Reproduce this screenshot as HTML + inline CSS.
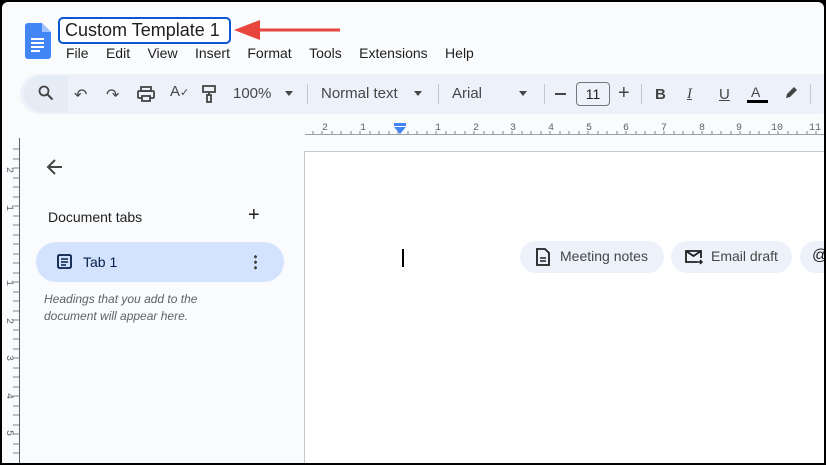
<!DOCTYPE html>
<html><head><meta charset="utf-8"><style>
*{margin:0;padding:0;box-sizing:border-box}
body{width:826px;height:465px;overflow:hidden;background:#000;font-family:"Liberation Sans",Arial,sans-serif;position:relative}
.frame{position:absolute;left:2px;top:2px;width:822px;height:461px;background:#f9fbfd;overflow:hidden;border-radius:6px 6px 0 0}
.a{position:absolute}
.menu span{margin-right:17.4px}
.tb{position:absolute;left:18px;top:72px;width:820px;height:40px;background:#edf2fa;border-radius:20px}
.t{position:absolute;font-size:14px;color:#444746}
.dd{position:absolute;top:89px;width:0;height:0;border-left:4.5px solid transparent;border-right:4.5px solid transparent;border-top:5px solid #444746}
.sep{position:absolute;top:82px;width:1px;height:20px;background:#c7c7c7}
</style></head><body>
<div class="frame">
<svg class="a" style="left:23px;top:21px" width="26" height="36" viewBox="0 0 26 36"><path d="M3 0h14l9 9v24a3 3 0 0 1-3 3H3a3 3 0 0 1-3-3V3a3 3 0 0 1 3-3z" fill="#4285f4"/><path d="M17 0v9h9z" fill="#a1c2fa"/><rect x="6" y="15" width="13" height="2" fill="#fff"/><rect x="6" y="19" width="13" height="2" fill="#fff"/><rect x="6" y="23" width="13" height="2" fill="#fff"/><rect x="6" y="27" width="9" height="2" fill="#fff"/></svg>
<div class="a" style="left:56px;top:15px;width:173px;height:27px;border:2px solid #0b57d0;border-radius:5px;background:#fff"></div>
<div class="a" style="left:63px;top:18px;font-size:18px;color:#1f1f1f">Custom Template 1</div>
<svg class="a" style="left:230px;top:16px" width="112" height="24"><path d="M8 12h100" stroke="#e8453c" stroke-width="3"/><path d="M2 12l26-10v20z" fill="#e8453c"/></svg>
<div class="a menu" style="left:64px;top:43px;font-size:14px;color:#1f1f1f;white-space:nowrap"><span>File</span><span>Edit</span><span>View</span><span>Insert</span><span>Format</span><span>Tools</span><span>Extensions</span><span>Help</span></div>
<div class="tb"></div>
<div class="a" style="left:22px;top:74px;width:44px;height:36px;background:#e6ecf6;border-radius:18px 0 0 18px"></div>
<svg class="a" style="left:36px;top:83px" width="16" height="16"><circle cx="6" cy="6" r="4.5" stroke="#444" stroke-width="1.8" fill="none"/><path d="M9.5 9.5l5 5" stroke="#444" stroke-width="2"/></svg>
<div class="t" style="left:72px;top:83px;font-size:16px">↶</div>
<div class="t" style="left:104px;top:83px;font-size:16px">↷</div>
<svg class="a" style="left:135px;top:84px" width="18" height="16"><rect x="4" y="1" width="10" height="4" fill="none" stroke="#444" stroke-width="1.8"/><rect x="1" y="5" width="16" height="7" rx="1" fill="none" stroke="#444" stroke-width="1.8"/><rect x="5" y="10" width="8" height="5" fill="#edf2fa" stroke="#444" stroke-width="1.8"/></svg>
<div class="t" style="left:168px;top:81px;font-size:15px">A<span style="font-size:11px">✓</span></div>
<svg class="a" style="left:200px;top:83px" width="14" height="18"><rect x="1" y="1" width="12" height="6" fill="none" stroke="#444" stroke-width="1.8"/><path d="M7 7v3" stroke="#444" stroke-width="1.8"/><rect x="5" y="10" width="4" height="7" fill="none" stroke="#444" stroke-width="1.8"/></svg>
<div class="t" style="left:231px;top:83px;font-size:15px">100%</div>
<div class="dd" style="left:283px"></div>
<div class="sep" style="left:305px"></div>
<div class="t" style="left:319px;top:83px;font-size:15px">Normal text</div>
<div class="dd" style="left:412px"></div>
<div class="sep" style="left:436px"></div>
<div class="t" style="left:450px;top:83px;font-size:15px">Arial</div>
<div class="dd" style="left:517px"></div>
<div class="sep" style="left:542px"></div>
<div class="a" style="left:553px;top:91px;width:11px;height:2px;background:#444"></div>
<div class="a" style="left:574px;top:80px;width:34px;height:24px;border:1px solid #747775;border-radius:4px;font-size:14px;text-align:center;line-height:22px;color:#1f1f1f">11</div>
<div class="t" style="left:616px;top:80px;font-size:20px">+</div>
<div class="sep" style="left:639px"></div>
<div class="t" style="left:653px;top:84px;font-size:15px;font-weight:bold">B</div>
<div class="t" style="left:685px;top:84px;font-size:15px;font-style:italic;font-family:'Liberation Serif',serif;text-decoration:underline">I</div>
<div class="t" style="left:717px;top:84px;font-size:15px;text-decoration:underline">U</div>
<div class="t" style="left:749px;top:82px;font-size:14px">A</div>
<div class="a" style="left:745px;top:98px;width:21px;height:3px;background:#000"></div>
<svg class="a" style="left:781px;top:83px" width="16" height="16"><path d="M3 13l1-4 7-7 3 3-7 7z" fill="#444"/></svg>
<div class="sep" style="left:808px"></div>
<div class="a" style="left:0;top:113px;width:822px;height:23px;background:#f9fbfd"></div>
<div class="a" style="left:303px;top:132px;width:520px;height:1px;background:#9aa0a6"></div>
<svg class="a" style="left:303px;top:118px" width="520" height="16" font-family="Liberation Mono,monospace" font-size="10" fill="#5f6368">
<g stroke="#80868b" stroke-width="1">
<path d="M8 11v3M17 11v3M27 11v3M36 11v3M46 11v3M55 11v3M65 11v3M74 11v3M84 11v3M93 11v3M103 11v3M112 11v3M122 11v3M131 11v3M141 11v3M150 11v3M160 11v3M169 11v3M179 11v3M188 11v3M198 11v3M207 11v3M217 11v3M226 11v3M236 11v3M245 11v3M255 11v3M264 11v3M274 11v3M283 11v3M293 11v3M302 11v3M312 11v3M321 11v3M331 11v3M340 11v3M350 11v3M359 11v3M369 11v3M378 11v3M388 11v3M397 11v3M407 11v3M416 11v3M426 11v3M435 11v3M445 11v3M454 11v3M464 11v3M473 11v3M483 11v3M492 11v3M502 11v3M511 11v3"/></g>
<text x="17" y="10">2</text><text x="55" y="10">1</text><text x="130" y="10">1</text><text x="168" y="10">2</text><text x="205" y="10">3</text><text x="243" y="10">4</text><text x="281" y="10">5</text><text x="318" y="10">6</text><text x="356" y="10">7</text><text x="394" y="10">8</text><text x="431" y="10">9</text><text x="466" y="10">10</text><text x="504" y="10">11</text>
</svg>
<svg class="a" style="left:391px;top:121px" width="14" height="12"><rect x="1" y="0" width="12" height="3" fill="#4285f4"/><path d="M1 4h12l-6 7z" fill="#4285f4"/></svg>
<div class="a" style="left:17px;top:136px;width:1px;height:330px;background:#5f6368"></div>
<svg class="a" style="left:2px;top:136px" width="16" height="330" font-family="Liberation Mono,monospace" font-size="10" fill="#5f6368">
<g stroke="#80868b"><path d="M9 11h6M9 21h6M9 30h6M9 40h6M9 49h6M9 59h6M9 68h6M9 78h6M9 87h6M9 97h6M9 106h6M9 116h6M9 125h6M9 135h6M9 144h6M9 154h6M9 163h6M9 173h6M9 182h6M9 192h6M9 201h6M9 211h6M9 220h6M9 230h6M9 239h6M9 249h6M9 258h6M9 268h6M9 277h6M9 287h6M9 296h6M9 306h6M9 315h6"/></g>
<g transform="rotate(90)"><text x="29" y="-3">2</text><text x="67" y="-3">1</text><text x="142" y="-3">1</text><text x="180" y="-3">2</text><text x="217" y="-3">3</text><text x="255" y="-3">4</text><text x="292" y="-3">5</text></g>
</svg>
<svg class="a" style="left:43px;top:155px" width="20" height="20"><path d="M17 10H4M10 3l-7 7 7 7" stroke="#444746" stroke-width="2" fill="none"/></svg>
<div class="a" style="left:46px;top:207px;font-size:14px;color:#1f1f1f">Document tabs</div>
<div class="a" style="left:246px;top:202px;font-size:20px;color:#1f1f1f">+</div>
<div class="a" style="left:34px;top:240px;width:248px;height:40px;background:#d3e3fd;border-radius:20px"></div>
<svg class="a" style="left:55px;top:252px" width="16" height="16"><rect x="1" y="1" width="13" height="13" rx="1.5" fill="none" stroke="#041e49" stroke-width="1.8"/><path d="M4 5h7M4 8h7M4 11h5" stroke="#041e49" stroke-width="1.5"/></svg>
<div class="a" style="left:81px;top:252px;font-size:14px;color:#041e49">Tab 1</div>
<div class="a" style="left:252px;top:252px;width:3px;height:16px;background:radial-gradient(circle,#444 1.5px,transparent 1.6px) 0 0/3px 5.5px"></div>
<div class="a" style="left:42px;top:289px;font-size:12px;font-style:italic;color:#5f6368;line-height:17px">Headings that you add to the<br>document will appear here.</div>
<div class="a" style="left:302px;top:149px;width:530px;height:320px;background:#fff;border:1px solid #c7c7c7"></div>
<div class="a" style="left:400px;top:247px;width:2px;height:18px;background:#000"></div>
<div class="a" style="left:518px;top:239px;width:144px;height:32px;background:#edf2fa;border-radius:16px"></div>
<svg class="a" style="left:534px;top:246px" width="14" height="18"><path d="M1 1h8l4 4v12H1z" fill="none" stroke="#1f1f1f" stroke-width="1.8"/><path d="M4 10h6M4 13h6" stroke="#1f1f1f" stroke-width="1.5"/></svg>
<div class="a" style="left:558px;top:246px;font-size:14px;color:#444746">Meeting notes</div>
<div class="a" style="left:669px;top:239px;width:121px;height:32px;background:#edf2fa;border-radius:16px"></div>
<svg class="a" style="left:683px;top:248px" width="18" height="15"><path d="M12 12H1V1h15v7" fill="none" stroke="#1f1f1f" stroke-width="1.8"/><path d="M1 1l7.5 5L16 1" fill="none" stroke="#1f1f1f" stroke-width="1.8"/><path d="M12 12h5M15 10l2 2-2 2" stroke="#1f1f1f" stroke-width="1.5" fill="none"/></svg>
<div class="a" style="left:709px;top:246px;font-size:14px;color:#444746">Email draft</div>
<div class="a" style="left:798px;top:239px;width:40px;height:32px;background:#edf2fa;border-radius:16px"></div>
<div class="a" style="left:810px;top:245px;font-size:16px;color:#1f1f1f">@</div>
</div>
</body></html>
